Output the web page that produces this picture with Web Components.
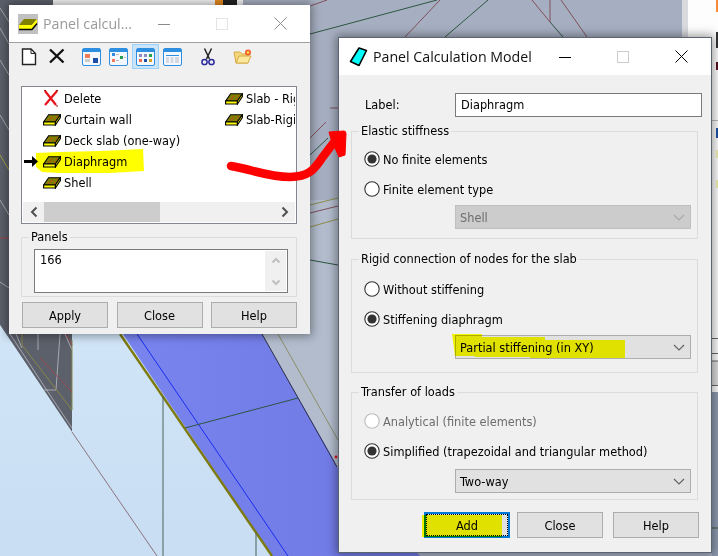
<!DOCTYPE html>
<html><head><meta charset="utf-8">
<style>
html,body{margin:0;padding:0;width:718px;height:556px;overflow:hidden}
body{font:12.65px "DejaVu Sans Condensed","DejaVu Sans",sans-serif;font-stretch:condensed;color:#000}
</style></head><body>
<x-desktop>
  <x-window style="left:9px;top:5px;width:301px;height:329px" heading="Panel calcul...">
    <x-glyph slot="icon" name="slabtitle"></x-glyph>
    <x-toolbar>
      <x-tool style="margin-right:1px"><x-glyph name="new"></x-glyph></x-tool>
      <x-tool style="margin-right:8px"><x-glyph name="cross"></x-glyph></x-tool>
      <x-tool><x-glyph name="w1"></x-glyph></x-tool>
      <x-tool><x-glyph name="w2"></x-glyph></x-tool>
      <x-tool selected><x-glyph name="w3"></x-glyph></x-tool>
      <x-tool style="margin-right:8px"><x-glyph name="w4"></x-glyph></x-tool>
      <x-tool style="margin-right:8px"><x-glyph name="scissors"></x-glyph></x-tool>
      <x-tool><x-glyph name="folder"></x-glyph></x-tool>
    </x-toolbar>
    <x-pad style="--pad:0 13px 0 12px">
      <x-listbox>
        <x-item slot="c1" icon="delx">Delete</x-item>
        <x-item slot="c1" icon="slab">Curtain wall</x-item>
        <x-item slot="c1" icon="slab">Deck slab (one-way)</x-item>
        <x-item slot="c1" icon="slab" current>Diaphragm</x-item>
        <x-item slot="c1" icon="slab">Shell</x-item>
        <x-item slot="c2" icon="slab">Slab - Rigid</x-item>
        <x-item slot="c2" icon="slab">Slab-Rigid</x-item>
      </x-listbox>
      <x-group legend="Panels" style="--pt:4px;--pb:3px;--mt:5px;--pl:12px;--pr:8px">
        <x-memo>166</x-memo>
      </x-group>
      <x-buttons style="--mt:5px;--gap:8.5px;--ml:1px">
        <x-btn>Apply</x-btn><x-btn>Close</x-btn><x-btn>Help</x-btn>
      </x-buttons>
    </x-pad>
  </x-window>

  <x-window active style="left:338px;top:37px;width:374px;height:516px" heading="Panel Calculation Model">
    <x-glyph slot="icon" name="cyan"></x-glyph>
    <x-pad style="--pad:18px 13px 0 12px">
      <x-field label="Label:" value="Diaphragm"></x-field>
      <x-group legend="Elastic stiffness" style="--mt:6px;--pt:5px;--pb:9px;--pl:12px;--pr:6px">
        <x-radio checked>No finite elements</x-radio>
        <x-radio>Finite element type</x-radio>
        <x-combo disabled style="--mt:1px">Shell</x-combo>
      </x-group>
      <x-group legend="Rigid connection of nodes for the slab" style="--mt:12px;--pt:7px;--pb:13px;--pl:12px;--pr:6px">
        <x-radio>Without stiffening</x-radio>
        <x-radio checked>Stiffening diaphragm</x-radio>
        <x-combo style="--mt:1px">Partial stiffening (in XY)</x-combo>
      </x-group>
      <x-group legend="Transfer of loads" style="--mt:11px;--pt:6px;--pb:6px;--pl:12px;--pr:6px">
        <x-radio disabled>Analytical (finite elements)</x-radio>
        <x-radio checked>Simplified (trapezoidal and triangular method)</x-radio>
        <x-combo style="--mt:3px">Two-way</x-combo>
      </x-group>
      <x-buttons style="--mt:12px;--gap:7px;--just:flex-end;--mr:-1px">
        <x-btn focused>Add</x-btn><x-btn style="margin-right:3px">Close</x-btn><x-btn>Help</x-btn>
      </x-buttons>
    </x-pad>
  </x-window>
  <x-annotations></x-annotations>
</x-desktop>

<script>
const GLYPHS={
 slab:`<svg width="18" height="12" viewBox="0 0 18 12"><path d="M.6 8 5.6 .8H17.4L12.4 8Z" fill="#808000" stroke="#000" stroke-width="1.1"/><path d="M.6 8H12.4V11H.6Z" fill="#ff0" stroke="#000" stroke-width="1.1"/><path d="M12.4 8 17.4 .8V3.6L12.4 11Z" fill="#ff0" stroke="#000" stroke-width="1.1"/><path d="M5 6h1.2M8 3.5h1.2M11 6h1.2M13 3h1.2M7 5h1" stroke="#e03030"/></svg>`,
 slabtitle:`<svg width="20" height="20" viewBox="0 0 20 20" style="display:block"><rect width="20" height="20" fill="#c0c0c0"/><path d="M1 11 6 5H19L14 11Z" fill="#808000"/><path d="M1 11H14V15H1Z" fill="#ff0"/><path d="M14 11 19 5V9L14 15Z" fill="#ff0"/><path d="M1 15.5H14L19 9.5" fill="none" stroke="#000" stroke-width="1.4"/></svg>`,
 delx:`<svg width="16" height="17" viewBox="0 0 16 17"><path d="M2 1 13 15M14 1 2 15" stroke="#e8141c" stroke-width="2.2" fill="none"/><path d="M1 0.6h2M13 .6h2M13 16h2" stroke="#900" /></svg>`,
 cyan:`<svg width="19" height="20" viewBox="0 0 19 20" style="display:block"><path d="M10 1 17.5 3.5 10 18.5 1.5 14.5Z" fill="#0ff" stroke="#000" stroke-width="1.6" stroke-linejoin="round"/></svg>`,
 new:`<svg width="16" height="18" viewBox="0 0 16 18" style="display:block"><path d="M1.5 1H10L14.5 5.5V16.5H1.5Z" fill="#fff" stroke="#222" stroke-width="1.4"/><path d="M10 1V5.5H14.5" fill="none" stroke="#222"/></svg>`,
 cross:`<svg width="18" height="17" viewBox="0 0 18 17" style="display:block"><path d="M2 1.5 15.5 14.5M15.5 1.5 2 14.5" stroke="#111" stroke-width="2.4"/></svg>`,
 scissors:`<svg width="14" height="18" viewBox="0 0 14 18" style="display:block"><path d="M3.5 .5 8.5 11M10.5 .5 5.5 11" stroke="#222" stroke-width="1.5" fill="none"/><circle cx="3.5" cy="14" r="2.6" fill="none" stroke="#2a2a9c" stroke-width="1.5"/><circle cx="10.5" cy="14" r="2.6" fill="none" stroke="#2a2a9c" stroke-width="1.5"/></svg>`,
 folder:`<svg width="20" height="18" viewBox="0 0 20 18" style="display:block"><path d="M1 4H7L9 6H15V15H3Z" fill="#f4d77a" stroke="#d6ab45"/><path d="M3 15 6 8H18L15 15Z" fill="#fbe89c" stroke="#d6ab45"/><circle cx="15" cy="4.5" r="3" fill="#f05a28"/><circle cx="15" cy="4.5" r="1.4" fill="#ffd24a"/></svg>`
};
function winIcon(inner){return `<svg width="19" height="18" viewBox="0 0 19 18" style="display:block"><rect x=".5" y=".5" width="18" height="17" rx="1.5" fill="#f4f7fb" stroke="#2e8ee0"/><rect x="1" y="1" width="17" height="3" fill="#2e8ee0"/>${inner}</svg>`}
GLYPHS.w1=winIcon('<rect x="3" y="6" width="5" height="4" fill="#ee7a5a"/><rect x="3" y="11" width="5" height="3" fill="#ccc"/><rect x="11" y="10" width="5" height="5" fill="#1c4ea8"/>');
GLYPHS.w2=winIcon('<rect x="3" y="5" width="3" height="3" fill="#2e8ee0"/><rect x="7" y="6" width="3" height="1" fill="#bbb"/><rect x="3" y="11" width="3" height="3" fill="#ee7a5a"/><rect x="7" y="12" width="3" height="1" fill="#bbb"/><rect x="11" y="8" width="3" height="3" fill="#22a050"/><rect x="15" y="9" width="2" height="1" fill="#bbb"/>');
GLYPHS.w3=winIcon('<rect x="3" y="6" width="3" height="3" fill="#8c8cc0"/><rect x="8" y="6" width="3" height="3" fill="#8c8cc0"/><rect x="13" y="6" width="3" height="3" fill="#22a050"/><rect x="3" y="11" width="3" height="3" fill="#ee6a4a"/><rect x="8" y="11" width="3" height="3" fill="#1c4ea8"/><rect x="13" y="11" width="3" height="3" fill="#d6a020"/>');
GLYPHS.w4=winIcon('<rect x="3" y="7" width="13" height="1" fill="#2e8ee0"/><path d="M3 10h3M7.5 10h3M12 10h4M3 12h3M7.5 12h3M12 12h4M3 14h3M7.5 14h3M12 14h4" stroke="#b8b8c8"/>');

function def(name,css,html,extra){
  customElements.define(name,class extends HTMLElement{
    connectedCallback(){
      if(this.shadowRoot)return;
      const r=this.attachShadow({mode:'open'});
      r.innerHTML=`<style>${css}</style>`+(typeof html==='function'?html(this):html);
      if(extra)extra(this,r);
    }
  });
}
def('x-desktop',`:host{display:block;position:relative;width:718px;height:556px;overflow:hidden;background:#a6afc1}svg{position:absolute;left:0;top:0}`,
`<svg width="718" height="556" viewBox="0 0 718 556">
 <defs><linearGradient id="lb" x1="0" y1="0" x2="0" y2="1"><stop offset="0" stop-color="#d1e6f7"/><stop offset="1" stop-color="#c9ddf3"/></linearGradient>
 <linearGradient id="bl" x1="0" y1="0" x2="1" y2="0"><stop offset="0" stop-color="#7a85f0"/><stop offset="1" stop-color="#6f78e2"/></linearGradient></defs>
 <rect width="718" height="556" fill="#a6afc1"/>
 <path d="M0 0H120V334L72 334V432L0 325Z" fill="#5c606b"/>
 <path d="M0 325 72 432V300H120L272 556H0Z" fill="url(#lb)"/>
 <path d="M100 300H262L337 467 420 556H272Z" fill="url(#bl)"/>
 <path d="M262 334 338 467V200H262Z" fill="#b2bccc"/>
 <path d="M120 334 272 556" stroke="#7d7a10" stroke-width="2.4" fill="none"/>
 <path d="M137 334 288 556" stroke="#1a2cf0" fill="none"/>
 <path d="M262 334 337 467" stroke="#2c2f45" fill="none"/>
 <path d="M185 428 298 398" stroke="#2e5540" fill="none"/>
 <path d="M163 396V556M256 533V556" stroke="#47665a" fill="none"/>
 <path d="M72 432 157 556" stroke="#8a7480" fill="none"/>
 <path d="M278 334 338 440" stroke="#8c8f6a" fill="none"/>
 <path d="M16 334 22 348M10 334 48 392 72 428M38 334V350M60 334 56 390 44 390M65 334 72 350" stroke="#b9bcc2" fill="none" opacity=".8"/>
 <path d="M22 334 22 345 72 410V340" stroke="#86864a" fill="none"/>
 <path d="M66 334 72 345M40 358 72 392" stroke="#9a4a50" fill="none"/>
 <path d="M0 8 9 22M0 28 9 44M0 60 9 75M0 115 9 130M0 200 9 215M0 282 9 288" stroke="#b8bbc0" fill="none" opacity=".8"/>
 <path d="M0 155 9 170" stroke="#a3a346"/>
 <path d="M0 238H9" stroke="#a04048"/>
 <path d="M310 34 437 0M445 37 488 0M550 22 563 37M310 155 328 138M310 260 338 265" stroke="#2e5540" fill="none"/>
 <path d="M310 6 327 0M405 37 440 0M532 0 550 22V0M561 0 587 37M310 213 338 206M310 138 326 122M330 108H338" stroke="#80505a" fill="none"/>
 <path d="M310 205 338 198M310 227 338 219" stroke="#8c8c48" fill="none"/>
 <circle cx="336" cy="457" r="1.4" fill="#e01010"/>
 <rect x="53" y="0" width="190" height="6" fill="#f6f6f6"/>
 <rect x="215" y="0" width="22" height="5" fill="#222"/><rect x="215" y="0" width="8" height="5" fill="#e88a20"/>
 <rect x="688" width="30" height="392" fill="#fdfdfd"/>
 <rect x="712" y="392" width="6" height="164" fill="#8f9bb2"/>
 <path d="M712 528H718" stroke="#3a5a40"/>
 <rect x="682" width="6" height="37" fill="#d8dade"/>
 <rect x="716" width="2" height="12" fill="#f58a3a"/>
 <rect x="716" y="32" width="2" height="16" fill="#333"/>
 <rect x="716" y="62" width="2" height="8" fill="#5a1020"/>
 <rect x="712" y="120" width="6" height="1" fill="#bbb"/>
 <rect x="716" y="128" width="2" height="10" fill="#2050a0"/>
 <rect x="716" y="150" width="2" height="8" fill="#f0f0b0"/>
 <rect x="716" y="180" width="2" height="8" fill="#f0f0b0"/>
 <rect x="712" y="361" width="6" height="24" fill="#dcdcdc"/>
 <path d="M712 338.500H718M712 353.500H718M712 361H718M712 385.500H718" stroke="#666"/>
</svg><slot></slot>`);
def('x-window',`:host{position:absolute;display:flex;flex-direction:column;box-sizing:border-box;background:#f0f0f0;box-shadow:0 0 9px 2px rgba(0,0,0,.38)}
:host([active]){border:1px solid #5b6270}
header{flex:none;height:37px;background:#fff;display:flex;align-items:center;box-sizing:border-box}
:host(:not([active])) header{border-bottom:1px solid #a0a0a0;height:38px}
.ic{width:34px;display:flex;justify-content:flex-end;padding-right:5px;box-sizing:border-box;flex:none}
h1{flex:1;margin:0;font:400 14.2px "Open Sans",sans-serif;color:#9a9a9a;white-space:nowrap;overflow:hidden}
:host([active]) h1{color:#111}
.c{flex:none;width:58.5px;height:37px;display:flex;align-items:center;justify-content:center}
svg{display:block}
main{flex:1;display:flex;flex-direction:column;min-height:0}`,
t=>{const a=t.hasAttribute('active');const m=a?'#000':'#8a8a8a',x=a?'#000':'#8a8a8a',s=a?'#ccc':'#e4e4e4';
return `<header><div class="ic"><slot name="icon"></slot></div><h1>${t.getAttribute('heading')}</h1>
<div class="c"><svg width="12" height="12"><path d="M0 6.5H12" stroke="${m}"/></svg></div>
<div class="c"><svg width="12" height="12"><rect x=".5" y=".5" width="11" height="11" fill="none" stroke="${s}"/></svg></div>
<div class="c"><svg width="13" height="13"><path d="M.5 .5 12.5 12.5M12.5 .5 .5 12.5" stroke="${x}"/></svg></div></header><main><slot></slot></main>`});
def('x-glyph',`:host{display:inline-flex;align-items:center;justify-content:center;line-height:0}`,t=>GLYPHS[t.getAttribute('name')]);
def('x-toolbar',`:host{display:flex;height:43px;box-sizing:border-box;padding:1px 0 0 6px;align-items:flex-start;flex:none}`,`<slot></slot>`);
def('x-tool',`:host{display:flex;width:27px;height:25px;align-items:center;justify-content:center;box-sizing:border-box;flex:none}
:host([selected]){background:#cce4f7;outline:1px solid #99d1ff;outline-offset:-1px}`,`<slot></slot>`);
def('x-pad',`:host{display:flex;flex-direction:column;padding:var(--pad)}`,`<slot></slot>`);
def('x-listbox',`:host{display:flex;flex-direction:column;height:138px;box-sizing:border-box;border:1px solid #828790;background:#fff;flex:none;padding:1px}
.cols{flex:1;display:flex;padding-top:0;min-height:0;overflow:hidden}
.col{display:flex;flex-direction:column;flex:none}
.a{width:182px}.b{flex:1;min-width:0;overflow:hidden}
.sb{flex:none;height:20px;background:#f0f0f0;display:flex;align-items:center;position:relative}
.btn{flex:none;width:21px;display:flex;justify-content:center}
.track{flex:1;height:100%;}
.thumb{width:116px;height:100%;background:#cdcdcd}
svg{display:block}`,
`<div class="cols"><div class="col a"><slot name="c1"></slot></div><div class="col b"><slot name="c2"></slot></div></div>
<div class="sb"><div class="btn"><svg width="8" height="12"><path d="M6.500 1.500 2 6 6.500 10.500" fill="none" stroke="#505050" stroke-width="2"/></svg></div><div class="track"><div class="thumb"></div></div><div class="btn"><svg width="8" height="12"><path d="M1.500 1.500 6 6 1.500 10.500" fill="none" stroke="#505050" stroke-width="2"/></svg></div></div>`);
def('x-item',`:host{display:flex;align-items:center;height:21px;box-sizing:border-box;white-space:nowrap;flex:none;padding-left:20px;position:relative}
.i{width:21px;flex:none;display:flex;align-items:center}
.ar{position:absolute;left:1px;top:4px}
svg{display:block}`,
t=>`${t.hasAttribute('current')?'<svg class="ar" width="15" height="13" viewBox="0 0 15 13"><path d="M0 6.5H9" stroke="#000" stroke-width="3"/><path d="M8 1 14 6.5 8 12Z" fill="#000"/></svg>':''}<span class="i">${GLYPHS[t.getAttribute('icon')]}</span><slot></slot>`);
def('x-group',`:host{display:block;margin-top:var(--mt,0)}
fieldset{margin:0;border:1px solid #dcdcdc;padding:var(--pt) var(--pr) var(--pb) var(--pl);min-width:0;display:flex;flex-direction:column}
legend{margin-left:calc(7px - var(--pl));padding:0 2px;line-height:16px;height:16px}`,
t=>`<fieldset><legend>${t.getAttribute('legend')}</legend><slot></slot></fieldset>`);
def('x-memo',`:host{display:flex;height:44px;box-sizing:border-box;border:1px solid #7a7a7a;background:#fff}
.t{flex:1;padding:2px 5px;line-height:16px}
.s{flex:none;width:21px;margin:1px;background:#f0f0f0;display:flex;flex-direction:column;justify-content:space-between;align-items:center;padding:6px 0 5px;box-sizing:border-box}`,
`<div class="t"><slot></slot></div><div class="s"><svg width="10" height="7"><path d="M1.500 5.500 5 2 8.500 5.500" fill="none" stroke="#bfbfbf" stroke-width="2"/></svg><svg width="10" height="7"><path d="M1.500 1.500 5 5 8.500 1.500" fill="none" stroke="#bfbfbf" stroke-width="2"/></svg></div>`);
def('x-buttons',`:host{display:flex;gap:var(--gap);margin:var(--mt) var(--mr,0) 0 var(--ml,0);justify-content:var(--just,flex-start)}`,`<slot></slot>`);
def('x-btn',`:host{display:flex;align-items:center;justify-content:center;box-sizing:border-box;width:86px;height:26px;background:#e1e1e1;border:1px solid #adadad;flex:none;position:relative}
:host([focused]){border:2px solid #0078d7}
:host([focused]) .f{position:absolute;inset:0;border:1px dotted #000}`,`<span class="f"></span><slot></slot>`);
def('x-field',`:host{display:flex;align-items:center;height:24px;margin-right:-4px}
label{width:104px;flex:none;box-sizing:border-box;padding:0 0 2px 14px}
.in{flex:1;height:24px;border:1px solid #7a7a7a;background:#fff;box-sizing:border-box;padding-left:5px;line-height:22px}`,
t=>`<label>${t.getAttribute('label')}</label><div class="in">${t.getAttribute('value')}</div>`);
def('x-radio',`:host{display:flex;align-items:center;height:30px;white-space:nowrap}
svg{flex:none;margin-right:3px;display:block}
:host([disabled]){color:#6d6d6d}`,
t=>{const d=t.hasAttribute('disabled');return `<svg width="16" height="16" viewBox="0 0 16 16"><circle cx="8" cy="8" r="7.2" fill="#fff" stroke="${d?'#bcbcbc':'#333'}" stroke-width="1.1"/>${t.hasAttribute('checked')?'<circle cx="8" cy="8" r="4.6" fill="#333"/>':''}</svg><span><slot></slot></span>`});
def('x-combo',`:host{display:flex;align-items:center;justify-content:space-between;height:24px;box-sizing:border-box;margin:var(--mt,0) 0 0 91px;background:#e1e1e1;border:1px solid #adadad;padding:0 4px}
:host([disabled]){background:#ccc;border-color:#bfbfbf;color:#6d6d6d}
span{padding-top:1px}
svg{display:block;margin-right:1px}`,
t=>`<span><slot></slot></span><svg width="12" height="7"><path d="M1 1 6 6 11 1" fill="none" stroke="${t.hasAttribute('disabled')?'#a8a8a8':'#606060'}" stroke-width="1.1"/></svg>`);
def('x-annotations',`:host{position:absolute;inset:0;display:block;pointer-events:none}
svg{position:absolute;left:0;top:0}.m{mix-blend-mode:multiply}`,
`<svg class="m" width="718" height="556"><path d="M36 153 60 152 100 151 143 149 144 171 110 173 60 173 42 172 36 167Z" fill="#ff0"/>
<path d="M452 334H482V337H545V340H625V358H530V357H475V356H455Z" fill="#ff0"/>
<path d="M422 515H502V537H422Z" fill="#ff0"/></svg>
<svg width="718" height="556"><path d="M231 166C250 169 268 177 290 177 310 177 315 168 322 158L338 137" fill="none" stroke="#fe0000" stroke-width="8.5" stroke-linecap="round"/><path d="M329 132 344 131Q346 131 346 134L345 155 339 157 331 139Z" fill="#fe0000" stroke="#fe0000" stroke-width="1" stroke-linejoin="round"/></svg>`);
</script>
</body></html>
